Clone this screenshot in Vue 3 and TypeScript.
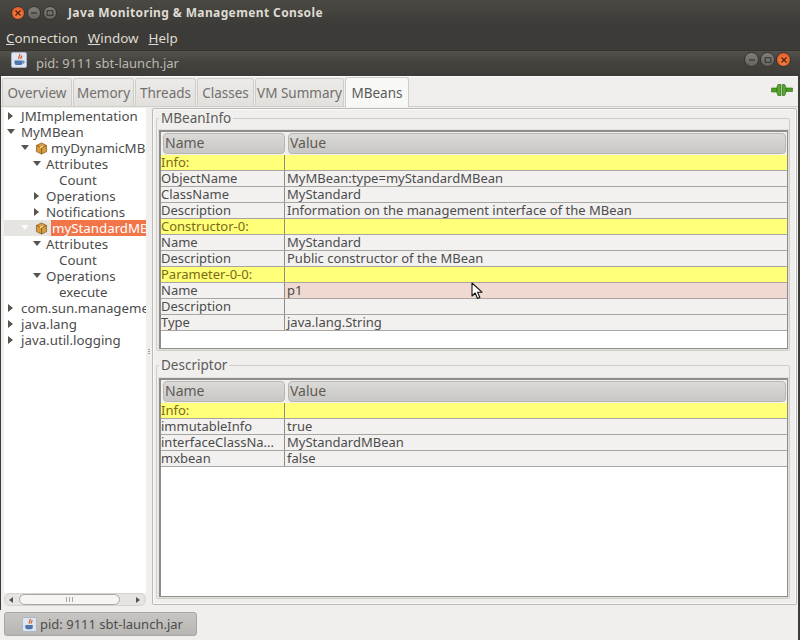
<script setup lang="ts">
interface TreeRow { label: string; text: number; arrow?: 'right' | 'down'; arrowX?: number; cube?: boolean; selected?: boolean }
interface InfoRow { name: string; value: string; kind?: 'head' | 'hit' }
interface InfoTable { title: string; rows: InfoRow[] }

const tabs: { label: string; width: number; active?: boolean }[] = [
  { label: 'Overview', width: 70 },
  { label: 'Memory', width: 61 },
  { label: 'Threads', width: 61 },
  { label: 'Classes', width: 57 },
  { label: 'VM Summary', width: 89 },
  { label: 'MBeans', width: 64, active: true },
]

const tree: TreeRow[] = [
  { label: 'JMImplementation', text: 17, arrow: 'right', arrowX: 4 },
  { label: 'MyMBean', text: 17, arrow: 'down', arrowX: 3 },
  { label: 'myDynamicMBean', text: 47, arrow: 'down', arrowX: 17, cube: true },
  { label: 'Attributes', text: 42, arrow: 'down', arrowX: 29 },
  { label: 'Count', text: 55 },
  { label: 'Operations', text: 42, arrow: 'right', arrowX: 30 },
  { label: 'Notifications', text: 42, arrow: 'right', arrowX: 30 },
  { label: 'myStandardMBean', text: 47, arrow: 'down', arrowX: 17, cube: true, selected: true },
  { label: 'Attributes', text: 42, arrow: 'down', arrowX: 29 },
  { label: 'Count', text: 55 },
  { label: 'Operations', text: 42, arrow: 'down', arrowX: 29 },
  { label: 'execute', text: 55 },
  { label: 'com.sun.management', text: 17, arrow: 'right', arrowX: 4 },
  { label: 'java.lang', text: 17, arrow: 'right', arrowX: 4 },
  { label: 'java.util.logging', text: 17, arrow: 'right', arrowX: 4 },
]

const tables: InfoTable[] = [
  {
    title: 'MBeanInfo',
    rows: [
      { name: 'Info:', value: '', kind: 'head' },
      { name: 'ObjectName', value: 'MyMBean:type=myStandardMBean' },
      { name: 'ClassName', value: 'MyStandard' },
      { name: 'Description', value: 'Information on the management interface of the MBean' },
      { name: 'Constructor-0:', value: '', kind: 'head' },
      { name: 'Name', value: 'MyStandard' },
      { name: 'Description', value: 'Public constructor of the MBean' },
      { name: 'Parameter-0-0:', value: '', kind: 'head' },
      { name: 'Name', value: 'p1', kind: 'hit' },
      { name: 'Description', value: '' },
      { name: 'Type', value: 'java.lang.String' },
    ],
  },
  {
    title: 'Descriptor',
    rows: [
      { name: 'Info:', value: '', kind: 'head' },
      { name: 'immutableInfo', value: 'true' },
      { name: 'interfaceClassNa...', value: 'MyStandardMBean' },
      { name: 'mxbean', value: 'false' },
    ],
  },
]
</script>

<template>
  <div class="window">
    <header class="titlebar">
      <div class="dots">
        <span class="dot close"><svg viewBox="0 0 8 8" width="8" height="8"><path d="M1.5 1.5l5 5M6.5 1.5l-5 5" stroke="#5a2008" stroke-width="1.4" /></svg></span>
        <span class="dot"><svg viewBox="0 0 8 8" width="8" height="8"><path d="M1 4h6" stroke="#3c3b37" stroke-width="1.4" /></svg></span>
        <span class="dot"><svg viewBox="0 0 8 8" width="8" height="8"><rect x="1.2" y="1.7" width="5.6" height="4.6" fill="none" stroke="#3c3b37" stroke-width="1.2" /></svg></span>
      </div>
      <span class="title">Java Monitoring &amp; Management Console</span>
    </header>

    <nav class="menubar">
      <span class="menu"><u>C</u>onnection</span>
      <span class="menu"><u>W</u>indow</span>
      <span class="menu"><u>H</u>elp</span>
    </nav>

    <div class="innerbar">
      <svg class="java" viewBox="0 0 16 16" width="16" height="16">
        <rect x="0.5" y="0.5" width="15" height="15" rx="1.5" fill="#dfe6f2" stroke="#a9b4c8" />
        <path d="M8.5 2c1.5 2-2 3-.5 5M10.5 3.5c1 1.5-1.5 2-.5 3.5" fill="none" stroke="#d8561c" stroke-width="1.3" />
        <path d="M3.5 8.500h8v2.500a2 2 0 0 1-2 2h-4a2 2 0 0 1-2-2z" fill="#4d76ad" />
        <path d="M11.5 9.2h1.500v1.800h-1.500" fill="none" stroke="#4d76ad" />
      </svg>
      <span class="innertitle">pid: 9111 sbt-launch.jar</span>
      <div class="innerdots">
        <span class="dot big"><svg viewBox="0 0 8 8" width="8" height="8"><path d="M1 4h6" stroke="#3c3b37" stroke-width="1.4" /></svg></span>
        <span class="dot big"><svg viewBox="0 0 8 8" width="8" height="8"><rect x="1.2" y="1.7" width="5.6" height="4.6" fill="none" stroke="#3c3b37" stroke-width="1.2" /></svg></span>
        <span class="dot big close"><svg viewBox="0 0 8 8" width="8" height="8"><path d="M1.5 1.5l5 5M6.5 1.5l-5 5" stroke="#5a2008" stroke-width="1.4" /></svg></span>
      </div>
    </div>

    <main class="content">
      <div class="tabbar">
        <div
          v-for="t in tabs"
          :key="t.label"
          class="tab"
          :class="{ active: t.active }"
          :style="{ width: t.width + 'px' }"
        >{{ t.label }}</div>
        <svg class="plug" viewBox="0 0 22 14" width="22" height="14">
          <path d="M0.5 5h5.500v4H0.500zM15 5h6.500v3.500H15z" fill="#4f9a27" stroke="#2f6d14" stroke-width=".6" />
          <path d="M7 1.500C5.500 3 5.500 11 7 12.500h3v-11zM11.500 1.500v11h2c2-1.500 2-9.500 0-11z" fill="#58a62c" stroke="#2f6d14" stroke-width=".7" />
        </svg>
      </div>

      <div class="split">
        <aside class="treepane">
          <div class="tree">
            <div v-for="(r, i) in tree" :key="i" class="treerow" :class="{ selected: r.selected }">
              <span
                v-if="r.arrow"
                class="arrow"
                :class="r.arrow"
                :style="{ left: r.arrowX + 'px' }"
              ></span>
              <svg v-if="r.cube" class="cube" viewBox="0 0 14 14" width="13" height="13" :style="{ left: r.text - 16 + 'px' }">
                <path d="M7 1l5.500 2.700v6.600L7 13l-5.500-2.700V3.700z" fill="#d99a3c" stroke="#8a6a30" stroke-width=".9" />
                <path d="M1.500 3.700L7 6.400l5.500-2.700M7 6.400V13" fill="none" stroke="#7c5a20" stroke-width=".9" />
                <path d="M5.200 6.300l3.600-1.600" stroke="#fbe9b8" stroke-width="1.200" />
              </svg>
              <span class="treelabel" :style="{ marginLeft: r.text + 'px' }">{{ r.label }}</span>
            </div>
          </div>
          <div class="hscroll">
            <span class="sarrow left"></span>
            <div class="strack">
              <div class="sthumb"><i></i><i></i><i></i></div>
            </div>
            <span class="sarrow right"></span>
          </div>
        </aside>

        <div class="grip"><i></i><i></i><i></i></div>

        <section class="panel">
          <fieldset v-for="tb in tables" :key="tb.title" class="group">
            <legend>{{ tb.title }}</legend>
            <div class="frame">
              <div class="thead">
                <div class="th name">Name</div>
                <div class="th">Value</div>
              </div>
              <div class="tbody">
                <div v-for="(row, ri) in tb.rows" :key="ri" class="trow" :class="row.kind">
                  <div class="cell name">{{ row.name }}</div>
                  <div class="cell value">{{ row.value }}</div>
                </div>
              </div>
            </div>
          </fieldset>
        </section>
      </div>

      <svg class="cursor" viewBox="0 0 12 18" width="12" height="18">
        <path d="M1 1v13l3.200-3 2.300 5.500 2.400-1-2.300-5.300h4.400z" fill="#fff" stroke="#111" stroke-width="1.100" stroke-linejoin="round" />
      </svg>
    </main>

    <footer class="taskbar">
      <div class="taskbtn">
        <svg viewBox="0 0 16 16" width="15" height="15">
          <rect x="0.5" y="0.500" width="15" height="15" rx="1.500" fill="#dfe6f2" stroke="#a9b4c8" />
          <path d="M8.500 2c1.500 2-2 3-.5 5M10.500 3.500c1 1.500-1.500 2-.5 3.500" fill="none" stroke="#d8561c" stroke-width="1.300" />
          <path d="M3.500 8.500h8v2.500a2 2 0 0 1-2 2h-4a2 2 0 0 1-2-2z" fill="#4d76ad" />
        </svg>
        <span>pid: 9111 sbt-launch.jar</span>
      </div>
    </footer>
  </div>
</template>

<style>
html, body { margin: 0; background: #2c2b28; }
</style>

<style scoped>
* { box-sizing: border-box; }
.window {
  width: 800px; height: 640px; display: flex; flex-direction: column; overflow: hidden;
  font-family: "Noto Sans", "Open Sans", sans-serif; font-size: 13px; color: #4c4c4c; background: #3c3b37;
}
.titlebar {
  height: 25px; flex: none; display: flex; align-items: center; position: relative; padding-left: 11px;
  background: linear-gradient(#4a4944, #3c3b37);
}
.dots { display: flex; gap: 2px; width: 57px; }
.dot {
  width: 14px; height: 14px; border-radius: 50%; display: flex; align-items: center; justify-content: center;
  background: linear-gradient(#807f7a, #65645f); border: 1px solid #34332f;
}
.dot.close { background: radial-gradient(circle at 50% 60%, #f58a4a, #dd4d1c); }
.dot.big { width: 15px; height: 15px; }
.title { font-weight: 700; font-size: 12px; color: #dfdbd2; letter-spacing: .38px; white-space: nowrap; }
.menubar {
  height: 25px; flex: none; display: flex; align-items: center; gap: 10px; padding-left: 6px;
  background: #3c3b37; color: #dfdbd2; font-size: 13.4px;
}
.innerbar {
  height: 26px; flex: none; display: flex; align-items: center; position: relative; padding-left: 11px;
  background: linear-gradient(#53524d 0, #45443f 40%, #3c3b37 100%); border-top: 1px solid #34332f;
}
.java { margin-top: -7px; }
.innertitle { margin-left: 9px; margin-top: -1px; color: #bdb9b0; font-size: 13px; }
.innerdots { margin-left: auto; margin-right: 9px; margin-top: -8px; display: flex; gap: 1px; }
.content {
  flex: none; height: 534px; position: relative; background: #f0efed; margin: 0 2px 0 1px;
  border-top: 1px solid #fafafa; display: flex; flex-direction: column;
}
.tabbar { height: 30px; flex: none; display: flex; align-items: flex-end; gap: 1px; padding-left: 1px; position: relative; border-bottom: 1px solid #cfcdc8; }
.tab {
  height: 28px; display: flex; align-items: center; justify-content: center; font-size: 13.5px; color: #716f6b; white-space: nowrap;
  background: linear-gradient(#ecebe9, #e2e0dd); border: 1px solid #cfcdc8; border-bottom: none; border-radius: 3px 3px 0 0;
}
.tab.active { height: 30px; margin-bottom: -1px; background: #f8f8f7; color: #5a5a58; position: relative; }
.plug { margin-left: auto; margin-right: 5px; align-self: center; margin-top: -3px; }
.split { flex: 1; display: flex; min-height: 0; }
.treepane { width: 142px; margin-left: 3px; display: flex; flex-direction: column; padding-top: 1px; }
.tree { flex: 1; background: #fff; overflow: hidden; min-height: 0; }
.treerow { height: 16px; display: flex; align-items: center; position: relative; white-space: nowrap; overflow: hidden; font-size: 13.3px; }
.treerow.selected { background: #e6e4e1; }
.treelabel { flex: 1; height: 16px; line-height: 16px; }
.treerow.selected .treelabel { background: #f2754a; color: #fff; padding-left: 1px; }
.arrow { position: absolute; top: 4px; width: 0; height: 0; }
.arrow.right { border-top: 4px solid transparent; border-bottom: 4px solid transparent; border-left: 5px solid #55544f; }
.arrow.down { top: 5px; border-left: 4px solid transparent; border-right: 4px solid transparent; border-top: 5px solid #55544f; }
.treerow.selected .arrow.down { border-top-color: #fbfbfa; }
.cube { position: absolute; top: 2px; }
.hscroll { height: 13px; margin-bottom: 4px; flex: none; display: flex; align-items: center; background: #e6e4e1; border: 1px solid #d4d2cd; border-radius: 6px; padding: 0 2px; }
.strack { flex: 1; height: 100%; }
.sthumb {
  width: 101px; height: 100%; margin-left: 6px; background: #f6f5f4; border: 1px solid #a9a7a2; border-radius: 6px;
  display: flex; align-items: center; justify-content: center; gap: 2px;
}
.sthumb i { width: 1px; height: 5px; background: #a8a6a1; }
.sarrow { width: 0; height: 0; border-top: 3px solid transparent; border-bottom: 3px solid transparent; }
.sarrow.left { border-right: 4px solid #55544f; margin-left: 2px; }
.sarrow.right { border-left: 4px solid #55544f; margin-right: 3px; }
.grip { width: 6px; flex: none; display: flex; flex-direction: column; align-items: center; justify-content: center; gap: 1px; padding-bottom: 14px; }
.grip i { width: 2px; height: 1px; background: #a8a6a1; }
.panel {
  flex: 1; margin: 1px 1px 5px 0; border: 1px solid #bcbab5; border-radius: 2px; box-shadow: inset 0 0 0 1px #f8f8f7;
  padding: 2px 6px 5px 3px; display: flex; flex-direction: column; min-height: 0;
}
.group {
  margin: 0; padding: 5px 1px 1px 2px; border: 1px solid #cfcdc8; border-radius: 2px; min-width: 0; flex: 1 1 0; min-height: 0;
  display: flex; flex-direction: column;
}
.group:first-child { flex: none; height: 240px; }
.group + .group { margin-top: 7px; padding-top: 6px; }
legend { margin-left: 0; padding: 0 2px; font-size: 13.5px; line-height: 14px; color: #5c5b57; }
.frame {
  flex: 1; display: flex; flex-direction: column; background: #fff; border: 1px solid #8e8d89; border-left-width: 2px;
  box-shadow: 0 0 0 1px #e2e0dd; min-height: 0;
}
.thead { height: 24px; flex: none; display: flex; gap: 3px; padding: 1px 1px 1px 2px; background: #f0efed; border-top: 1px solid #8e8d89; }
.th {
  flex: 1; padding-left: 1px; font-size: 14px; line-height: 18px; color: #5c5b57; border: 1px solid #b8b6b1; border-radius: 4px;
  background: linear-gradient(#dcdad7, #c9c7c3);
}
.th.name { flex: none; width: 122px; }
.tbody { flex: none; }
.trow { height: 16px; display: flex; background: #f2f1f0; border-bottom: 1px solid #a8a6a1; }
.trow.head { background: #ffff78; }
.trow.hit .value { background: #f0d9d0; }
.cell { line-height: 15px; white-space: nowrap; overflow: hidden; font-size: 13px; }
.cell.name { width: 124px; flex: none; border-right: 1px solid #8e8d89; }
.cell.value { flex: 1; padding-left: 2px; }
.trow.head .cell { color: #7b6a18; }
.cursor { position: absolute; left: 470px; top: 205px; }
.taskbar { height: 30px; flex: none; margin: 0 2px 1px 0; background: #f0efed; padding: 2px 0 2px 4px; }
.taskbtn {
  width: 193px; height: 24px; display: flex; align-items: center; gap: 3px; padding-left: 17px; font-size: 13px; color: #4c4c4c;
  background: linear-gradient(#c8c6c2, #b8b6b2); border: 1px solid #a8a6a1; border-radius: 3px;
}
</style>
